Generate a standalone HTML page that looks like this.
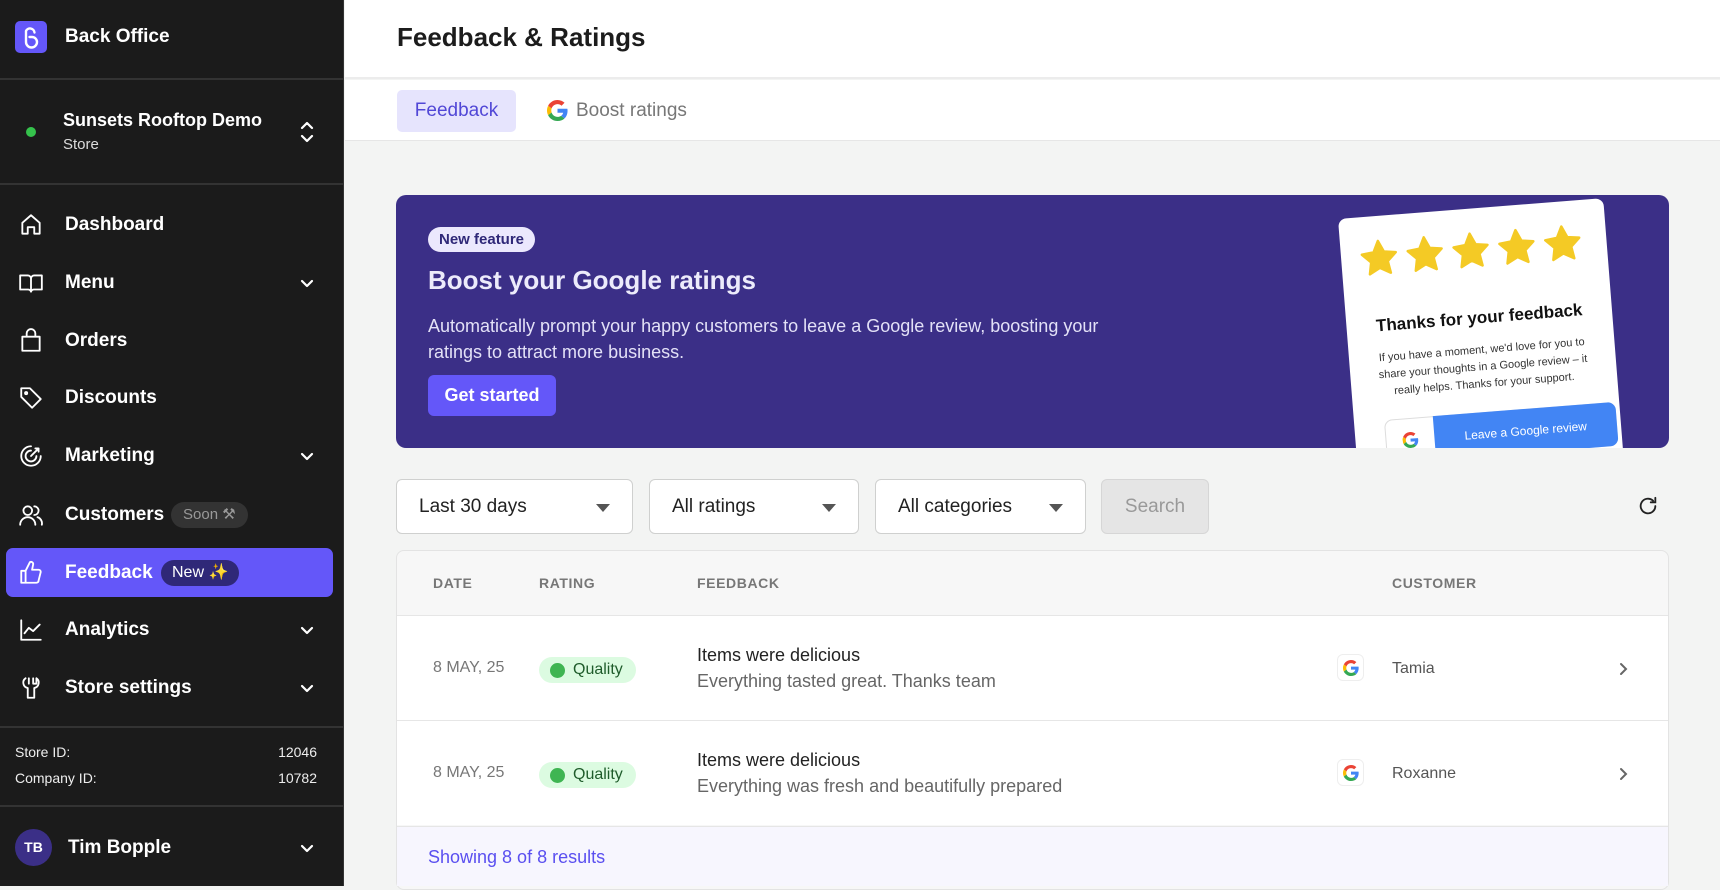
<!DOCTYPE html>
<html><head><meta charset="utf-8">
<style>
*{box-sizing:border-box;margin:0;padding:0}
body{width:1720px;height:886px;overflow:hidden;font-family:"Liberation Sans",Arial,sans-serif;background:#f3f4f3;position:relative}
.abs{position:absolute}
#side{left:0;top:0;width:344px;height:886px;background:#1b1b1b;color:#fff;border-right:1px solid #333}
.hr{position:absolute;left:0;width:343px;height:2px;background:#333}
.nav{position:absolute;left:0;width:343px;height:50px;display:flex;align-items:center;font-size:19px;font-weight:bold;color:#fff}
.nav svg.ic{position:absolute;left:18px;width:26px;height:26px}
.nav .lb{position:absolute;left:65px}
.nav .chev{position:absolute;left:298px;width:18px;height:18px}
.ic{fill:none;stroke:#fff;stroke-width:1.7;stroke-linecap:round;stroke-linejoin:round}
.chev{fill:none;stroke:#fff;stroke-width:2.2;stroke-linecap:round;stroke-linejoin:round}
.sel{position:absolute;top:479px;height:55px;background:#fff;border:1px solid #cfd0cf;border-radius:6px;font-size:19px;color:#222;display:flex;align-items:center;padding-left:22px}
.sel .tri{position:absolute;right:22px;top:24px;width:0;height:0;border-left:7px solid transparent;border-right:7px solid transparent;border-top:8px solid #555}
.th{position:absolute;top:575px;font-size:14px;font-weight:bold;color:#777;letter-spacing:.6px}
.row{position:absolute;left:397px;width:1271px;height:105px;background:#fff;border-top:1px solid #e6e6e6}
.row .d{position:absolute;left:36px;top:43px;font-size:16px;color:#777}
.pill{position:absolute;left:142px;top:41px;width:97px;height:26px;background:#dcfbe1;border-radius:13px;font-size:16px;color:#1f5c2b;padding-left:34px;line-height:26px}
.pill i{position:absolute;left:11px;top:6px;width:15px;height:15px;border-radius:50%;background:#3fb552}
.row .t1{position:absolute;left:300px;top:29px;font-size:18px;color:#222}
.row .t2{position:absolute;left:300px;top:55px;font-size:18px;color:#666}
.row .g{position:absolute;left:940px;top:38px;width:27px;height:27px;border:1px solid #eee;border-radius:6px;display:flex;align-items:center;justify-content:center}
.row .n{position:absolute;left:995px;top:44px;font-size:16px;color:#555}
.row .ar{position:absolute;left:1218px;top:45px}
</style></head><body>
<svg width="0" height="0" style="position:absolute"><defs>
<symbol id="G" viewBox="0 0 48 48"><path fill="#EA4335" d="M24 9.5c3.54 0 6.71 1.22 9.21 3.6l6.85-6.85C35.9 2.38 30.47 0 24 0 14.62 0 6.51 5.38 2.56 13.22l7.98 6.19C12.43 13.72 17.74 9.5 24 9.5z"/><path fill="#4285F4" d="M46.98 24.55c0-1.57-.15-3.09-.38-4.55H24v9.02h12.94c-.58 2.96-2.26 5.48-4.78 7.18l7.73 6c4.51-4.18 7.09-10.36 7.09-17.65z"/><path fill="#FBBC05" d="M10.53 28.59c-.48-1.45-.76-2.99-.76-4.59s.27-3.14.76-4.59l-7.98-6.19C.92 16.46 0 20.12 0 24c0 3.88.92 7.54 2.56 10.78l7.97-6.19z"/><path fill="#34A853" d="M24 48c6.48 0 11.93-2.13 15.89-5.81l-7.73-6c-2.15 1.45-4.92 2.3-8.16 2.3-6.26 0-11.57-4.22-13.47-9.91l-7.98 6.19C6.51 42.62 14.62 48 24 48z"/></symbol>
<symbol id="ch" viewBox="0 0 18 18"><path d="M4 7l5 5 5-5"/></symbol>
<symbol id="st" viewBox="0 0 24 24"><path d="M12 1.8l3.1 6.6 7.1.9-5.2 5 1.3 7.1L12 18l-6.3 3.4L7 14.3l-5.2-5 7.1-.9z" fill="#f4ca25" stroke="#f4ca25" stroke-width="1.5" stroke-linejoin="round"/></symbol>
</defs></svg>

<div id="side" class="abs">
  <div class="abs" style="left:15px;top:21px;width:32px;height:32px;background:#6457f9;border-radius:5px">
    <svg viewBox="0 0 32 32" width="32" height="32"><path d="M11 10v11a5.5 5.5 0 0 0 11 0 5 5 0 0 0-5-5h-2.5M11 10a4.5 4.5 0 0 1 8.5 1.5" fill="none" stroke="#fff" stroke-width="2.4" stroke-linecap="round"/></svg>
  </div>
  <div class="abs" style="left:65px;top:26px;font-size:19px;font-weight:bold">Back Office</div>
  <div class="hr" style="top:78px"></div>
  <div class="abs" style="left:26px;top:127px;width:10px;height:10px;border-radius:50%;background:#35c24c"></div>
  <div class="abs" style="left:63px;top:110px;font-size:18px;font-weight:bold">Sunsets Rooftop Demo</div>
  <div class="abs" style="left:63px;top:136px;font-size:15px;color:#ddd">Store</div>
  <svg class="abs chev" style="left:298px;top:120px" width="18" height="24" viewBox="0 0 18 24"><path d="M4 8l5-5 5 5M4 16l5 5 5-5"/></svg>
  <div class="hr" style="top:183px"></div>

  <div class="nav" style="top:200px"><svg class="ic" viewBox="0 0 24 24"><path d="M4 10l8-7 8 7v10h-5v-6h-6v6H4z"/></svg><span class="lb">Dashboard</span></div>
  <div class="nav" style="top:258px"><svg class="ic" viewBox="0 0 24 24"><path d="M2 5h7a3 3 0 0 1 3 3v12a3 3 0 0 0-3-2H2zM22 5h-7a3 3 0 0 0-3 3v12a3 3 0 0 1 3-2h7z"/></svg><span class="lb">Menu</span><svg class="chev" viewBox="0 0 18 18"><use href="#ch"/></svg></div>
  <div class="nav" style="top:316px"><svg class="ic" viewBox="0 0 24 24"><path d="M4 8h16v13H4zM8 8V5a4 4 0 0 1 8 0v3"/></svg><span class="lb">Orders</span></div>
  <div class="nav" style="top:373px"><svg class="ic" viewBox="0 0 24 24"><path d="M3 3h8l10 10-8 8L3 11z"/><circle cx="7.5" cy="7.5" r="1"/></svg><span class="lb">Discounts</span></div>
  <div class="nav" style="top:431px"><svg class="ic" viewBox="0 0 24 24"><path d="M21 12a9 9 0 1 1-9-9M17 12a5 5 0 1 1-5-5M12 12l7-7M16 5h3v3"/></svg><span class="lb">Marketing</span><svg class="chev" viewBox="0 0 18 18"><use href="#ch"/></svg></div>
  <div class="nav" style="top:490px"><svg class="ic" viewBox="0 0 24 24"><circle cx="9" cy="8" r="4"/><path d="M2 21a7 7 0 0 1 14 0M15 4a4 4 0 0 1 0 8M18 14a6 6 0 0 1 4 7"/></svg><span class="lb">Customers</span>
    <span class="abs" style="left:171px;top:12px;height:26px;padding:0 12px;border-radius:13px;background:#333;color:#999;font-size:15px;font-weight:normal;line-height:26px">Soon ⚒</span></div>
  <div class="abs" style="left:6px;top:548px;width:327px;height:49px;background:#6457f9;border-radius:7px"></div>
  <div class="nav" style="top:548px"><svg class="ic" viewBox="0 0 24 24"><path d="M7 10v11H3V10zM7 10l4-8a2 2 0 0 1 3 2l-1 5h6a2 2 0 0 1 2 2l-2 8a2 2 0 0 1-2 2H7"/></svg><span class="lb">Feedback</span>
    <span class="abs" style="left:161px;top:12px;height:26px;padding:0 11px;border-radius:13px;background:#2f2878;color:#fff;font-size:16px;font-weight:normal;line-height:26px">New <span style="color:#f5cf3a">✨</span></span></div>
  <div class="nav" style="top:605px"><svg class="ic" viewBox="0 0 24 24"><path d="M3 3v18h18M6 15l4-5 4 3 6-6"/></svg><span class="lb">Analytics</span><svg class="chev" viewBox="0 0 18 18"><use href="#ch"/></svg></div>
  <div class="nav" style="top:663px"><svg class="ic" viewBox="0 0 24 24"><path d="M7 3a5 5 0 0 0 2 9v9h6v-9a5 5 0 0 0 2-9v5h-3V3M10 3v5"/></svg><span class="lb">Store settings</span><svg class="chev" viewBox="0 0 18 18"><use href="#ch"/></svg></div>

  <div class="hr" style="top:726px"></div>
  <div class="abs" style="left:15px;top:744px;font-size:14px;color:#eee">Store ID:</div>
  <div class="abs" style="right:26px;top:744px;font-size:14px;color:#eee">12046</div>
  <div class="abs" style="left:15px;top:770px;font-size:14px;color:#eee">Company ID:</div>
  <div class="abs" style="right:26px;top:770px;font-size:14px;color:#eee">10782</div>
  <div class="hr" style="top:805px"></div>
  <div class="abs" style="left:15px;top:829px;width:37px;height:37px;border-radius:50%;background:#3b2f87;font-size:14px;font-weight:bold;line-height:37px;text-align:center">TB</div>
  <div class="abs" style="left:68px;top:837px;font-size:19px;font-weight:bold">Tim Bopple</div>
  <svg class="abs chev" style="left:298px;top:839px" width="18" height="18" viewBox="0 0 18 18"><use href="#ch"/></svg>
</div>

<div class="abs" style="left:345px;top:0;width:1375px;height:79px;background:#fff;border-bottom:2px solid #ececec"></div>
<div class="abs" style="left:397px;top:22px;font-size:26px;font-weight:bold;color:#1c1c1c">Feedback &amp; Ratings</div>
<div class="abs" style="left:345px;top:80px;width:1375px;height:61px;background:#fff;border-bottom:1px solid #e6e6e6"></div>
<div class="abs" style="left:397px;top:90px;width:119px;height:42px;background:#e6e4fd;border-radius:5px;color:#5147d6;font-size:19px;text-align:center;line-height:42px">Feedback</div>
<svg class="abs" style="left:547px;top:100px" width="21" height="21"><use href="#G"/></svg>
<div class="abs" style="left:576px;top:100px;font-size:19px;color:#777">Boost ratings</div>

<div class="abs" style="left:396px;top:195px;width:1273px;height:253px;background:#3b2f87;border-radius:10px;overflow:hidden">
  <div class="abs" style="left:32px;top:32px;height:25px;padding:0 11px;border-radius:13px;background:#ebe8fd;color:#2f2878;font-size:15px;font-weight:bold;line-height:25px">New feature</div>
  <div class="abs" style="left:32px;top:70px;font-size:26px;font-weight:bold;color:#ecebfb">Boost your Google ratings</div>
  <div class="abs" style="left:32px;top:118px;width:720px;font-size:18px;line-height:26px;color:#e3e1f7">Automatically prompt your happy customers to leave a Google review, boosting your ratings to attract more business.</div>
  <div class="abs" style="left:32px;top:180px;width:128px;height:41px;background:#6457f9;border-radius:6px;color:#fff;font-size:18px;font-weight:bold;text-align:center;line-height:41px">Get started</div>
  <div class="abs" style="left:942px;top:24px;width:266px;height:290px;background:#fff;border-radius:8px;transform:rotate(-4.5deg);transform-origin:0 0">
    <div style="position:absolute;left:18px;top:22px;width:240px;height:44px">
      <svg style="position:absolute;left:0" width="40" height="40"><use href="#st"/></svg>
      <svg style="position:absolute;left:46px" width="40" height="40"><use href="#st"/></svg>
      <svg style="position:absolute;left:92px" width="40" height="40"><use href="#st"/></svg>
      <svg style="position:absolute;left:138px" width="40" height="40"><use href="#st"/></svg>
      <svg style="position:absolute;left:184px" width="40" height="40"><use href="#st"/></svg>
    </div>
    <div style="position:absolute;left:0;width:266px;top:100px;text-align:center;font-size:17px;font-weight:bold;color:#111">Thanks for your feedback</div>
    <div style="position:absolute;left:20px;width:226px;top:134px;text-align:center;font-size:11px;line-height:17px;color:#333">If you have a moment, we'd love for you to share your thoughts in a Google review – it really helps. Thanks for your support.</div>
    <div style="position:absolute;left:30px;top:204px;width:232px;height:44px;border:1px solid #ddd;border-radius:8px;background:#fff">
      <svg style="position:absolute;left:16px;top:13px" width="16" height="16"><use href="#G"/></svg>
      <div style="position:absolute;left:48px;top:-1px;right:-1px;height:44px;background:#4285f4;border-radius:0 8px 8px 0;color:#fff;font-size:12px;text-align:center;line-height:44px">Leave a Google review</div>
    </div>
  </div>
</div>

<div class="sel" style="left:396px;width:237px">Last 30 days<span class="tri"></span></div>
<div class="sel" style="left:649px;width:210px">All ratings<span class="tri"></span></div>
<div class="sel" style="left:875px;width:211px">All categories<span class="tri"></span></div>
<div class="abs" style="left:1101px;top:479px;width:108px;height:55px;background:#e5e5e5;border:1px solid #d6d6d6;border-radius:6px;color:#999;font-size:19px;text-align:center;line-height:53px">Search</div>
<svg class="abs" style="left:1637px;top:495px" width="22" height="22" viewBox="0 0 24 24" fill="none" stroke="#222" stroke-width="2" stroke-linecap="round"><path d="M20 12a8 8 0 1 1-2.5-5.8M20 3v5h-5"/></svg>

<div class="abs" style="left:396px;top:550px;width:1273px;height:340px;background:#f7f7f7;border:1px solid #e3e3e3;border-radius:8px"></div>
<div class="th" style="left:433px">DATE</div>
<div class="th" style="left:539px">RATING</div>
<div class="th" style="left:697px">FEEDBACK</div>
<div class="th" style="left:1392px">CUSTOMER</div>
<div class="row" style="top:615px"><div class="d">8 MAY, 25</div><div class="pill"><i></i>Quality</div><div class="t1">Items were delicious</div><div class="t2">Everything tasted great. Thanks team</div><div class="g"><svg width="16" height="16"><use href="#G"/></svg></div><div class="n">Tamia</div><svg class="ar" width="16" height="16" viewBox="0 0 16 16" fill="none" stroke="#666" stroke-width="2" stroke-linecap="round"><path d="M6 3l5 5-5 5"/></svg></div>
<div class="row" style="top:720px"><div class="d">8 MAY, 25</div><div class="pill"><i></i>Quality</div><div class="t1">Items were delicious</div><div class="t2">Everything was fresh and beautifully prepared</div><div class="g"><svg width="16" height="16"><use href="#G"/></svg></div><div class="n">Roxanne</div><svg class="ar" width="16" height="16" viewBox="0 0 16 16" fill="none" stroke="#666" stroke-width="2" stroke-linecap="round"><path d="M6 3l5 5-5 5"/></svg></div>
<div class="abs" style="left:397px;top:826px;width:1271px;height:60px;background:#f7f6fe;border-top:1px solid #e6e6e6"></div>
<div class="abs" style="left:428px;top:847px;font-size:18px;color:#5a4ff0">Showing 8 of 8 results</div>
</body></html>
